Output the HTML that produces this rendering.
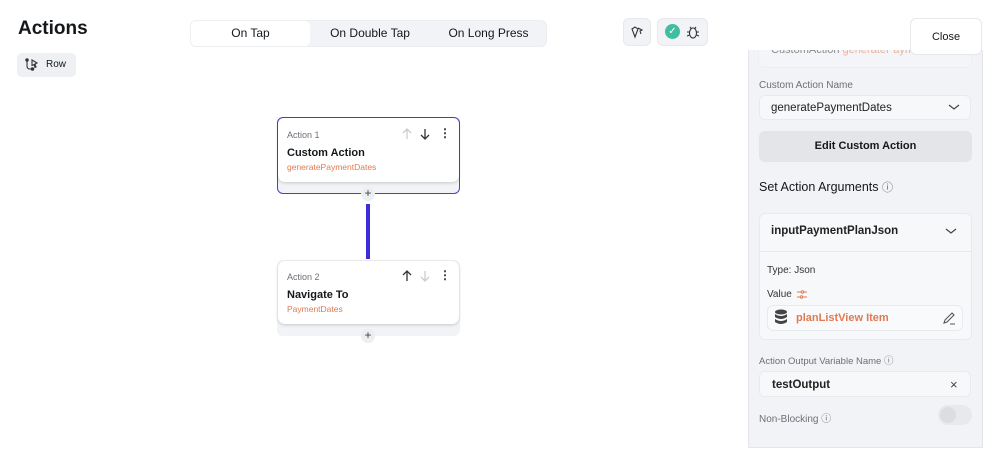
<!DOCTYPE html>
<html><head><style>
*{box-sizing:border-box;margin:0;padding:0}
body{width:1000px;height:467px;background:#fff;font-family:"Liberation Sans",sans-serif;position:relative;overflow:hidden;color:#14181b}
.abs{position:absolute}
.seg{left:190px;top:20px;width:357px;height:27px;background:#f1f3f6;border-radius:6px;border:1px solid #eceef2}
.seg div{position:absolute;top:0;height:25px;line-height:25px;font-size:12px;text-align:center}
.card{background:#fff;border-radius:7px;box-shadow:0 1px 3px rgba(0,0,0,.18);}
.lbl{font-size:10px;color:#6b7075}
.ttl{font-size:11px;font-weight:bold;color:#14181b}
.sub{font-size:8.5px;color:#e07a52}
.plus{width:14px;height:14px;border-radius:50%;background:#eceef1;font-size:12px;line-height:13px;text-align:center;color:#444}
.panel{left:748px;top:50px;width:235px;height:398px;background:#f2f3f6;border:1px solid #e4e6ea;border-top:none}
.fld{background:#f7f8fa;border:1px solid #e8eaee;border-radius:6px}
</style></head><body>
<div class="abs" style="left:18px;top:18px;font-size:19px;font-weight:bold">Actions</div>
<div class="abs" style="left:17px;top:53px;width:59px;height:24px;background:#eef0f3;border-radius:5px;font-size:10px;line-height:24px;padding-left:29px">Row</div>
<svg class="abs" style="left:25px;top:58px" width="14" height="14" viewBox="0 0 14 14" fill="none" stroke="#333" stroke-width="1.1"><circle cx="2" cy="2" r="1.2" fill="#333"/><path d="M2 3v5q0 3 3 3h1"/><circle cx="7.5" cy="11" r="1.2" fill="#333"/><path d="M7 2l5 3-2 1 1 3-1 .5-1-3-2 1z"/></svg>
<div class="abs seg"><div style="left:0;width:119px;background:#fff;border-radius:5px">On Tap</div><div style="left:119px;width:120px">On Double Tap</div><div style="left:239px;width:117px">On Long Press</div></div>
<div class="abs" style="left:623px;top:18px;width:28px;height:28px;background:#f1f3f6;border-radius:6px;border:1px solid #e6e8ec"></div>
<svg class="abs" style="left:629px;top:24px" width="16" height="16" viewBox="0 0 16 16" fill="none" stroke="#333" stroke-width="1.1"><path d="M3 5l3-2 3 2-3 8z"/><path d="M9 4l4 2-2 1 1 3"/></svg>
<div class="abs" style="left:657px;top:18px;width:51px;height:28px;background:#f1f3f6;border-radius:6px;border:1px solid #e6e8ec"></div>
<div class="abs" style="left:665px;top:24px;width:15px;height:15px;border-radius:50%;background:#3fbf9f;color:#fff;font-size:10px;line-height:15px;text-align:center">✓</div>
<svg class="abs" style="left:686px;top:24px" width="14" height="16" viewBox="0 0 14 16" fill="none" stroke="#333" stroke-width="1.1"><ellipse cx="7" cy="9" rx="3.5" ry="5"/><path d="M4 3l1.5 2M10 3L8.5 5M1 8h2.5M10.5 8H13M1 12l2.5-1M13 12l-2.5-1"/></svg>
<div class="abs panel"></div>
<div class="abs" style="left:748px;top:50px;width:235px;height:20px;overflow:hidden">
<div class="abs fld" style="left:10px;top:-20px;width:214px;height:38px;font-size:11px;color:#333;padding:13px 0 0 12px;opacity:.55">CustomAction <span style="color:#e07a52">generatePaymentDates</span></div></div>
<div class="abs" style="left:910px;top:18px;width:72px;height:37px;background:#fff;border:1px solid #e6e8ec;border-radius:6px;font-size:11px;line-height:36px;text-align:center">Close</div>
<div class="abs lbl" style="left:759px;top:80px">Custom Action Name</div>
<div class="abs fld" style="left:759px;top:95px;width:212px;height:25px;font-size:11.5px;line-height:24px;padding-left:11px;color:#222">generatePaymentDates</div>
<svg class="abs" style="left:948px;top:102px" width="12" height="10" viewBox="0 0 12 10" fill="none" stroke="#444" stroke-width="1.2"><path d="M1 3l5 4 5-4"/></svg>
<div class="abs" style="left:759px;top:131px;width:213px;height:31px;background:#e3e5e9;border-radius:6px;font-size:11px;font-weight:bold;line-height:31px;text-align:center">Edit Custom Action</div>
<div class="abs" style="left:759px;top:179px;font-size:12.5px">Set Action Arguments <span style="font-size:11px;color:#666">ⓘ</span></div>
<div class="abs fld" style="left:759px;top:213px;width:213px;height:127px"></div>
<div class="abs" style="left:759px;top:251px;width:213px;height:1px;background:#e6e8ec"></div>
<div class="abs" style="left:771px;top:225px;font-size:11.5px;font-weight:bold;color:#222">inputPaymentPlanJson</div>
<svg class="abs" style="left:945px;top:226px" width="12" height="10" viewBox="0 0 12 10" fill="none" stroke="#444" stroke-width="1.2"><path d="M1 3l5 4 5-4"/></svg>
<div class="abs lbl" style="left:767px;top:265px;color:#333">Type: Json</div>
<div class="abs lbl" style="left:767px;top:289px;color:#333">Value</div>
<svg class="abs" style="left:796px;top:289px" width="12" height="11" viewBox="0 0 12 11" fill="none" stroke="#e07a52" stroke-width="1"><path d="M1 3h4M8 3h3M1 8h3M7 8h4"/><circle cx="6.5" cy="3" r="1.2"/><circle cx="5.5" cy="8" r="1.2"/></svg>
<div class="abs fld" style="left:767px;top:305px;width:196px;height:26px;background:#f9fafb"></div>
<svg class="abs" style="left:774px;top:309px" width="14" height="16" viewBox="0 0 14 16" fill="#444"><ellipse cx="7" cy="3" rx="6" ry="2.5"/><path d="M1 5q6 4 12 0v3q-6 4-12 0zM1 10q6 4 12 0v3q-6 4-12 0z"/></svg>
<div class="abs" style="left:796px;top:312px;font-size:11px;color:#e07a52;font-weight:bold">planListView Item</div>
<svg class="abs" style="left:942px;top:311px" width="14" height="14" viewBox="0 0 14 14" fill="none" stroke="#555" stroke-width="1.1"><path d="M2 12l1-3 7-7 2 2-7 7zM8 13h5"/></svg>
<div class="abs lbl" style="left:759px;top:353px;font-size:9.5px">Action Output Variable Name ⓘ</div>
<div class="abs fld" style="left:759px;top:371px;width:212px;height:26px;font-size:11.5px;font-weight:bold;line-height:26px;padding-left:12px;color:#222">testOutput</div>
<div class="abs" style="left:950px;top:377px;font-size:13px;color:#444">×</div>
<div class="abs lbl" style="left:759px;top:410px;font-size:10px">Non-Blocking ⓘ</div>
<div class="abs" style="left:938px;top:405px;width:34px;height:20px;border-radius:10px;background:#e8e9ec"><div style="position:absolute;left:2px;top:2px;width:16px;height:16px;border-radius:50%;background:#dcdde0"></div></div>
<!-- flow -->
<div class="abs" style="left:277px;top:117px;width:183px;height:77px;border:1.5px solid #4b3fd0;border-radius:6px;background:#f2f3f6"></div>
<div class="abs card" style="left:278px;top:118px;width:181px;height:64px"></div>
<div class="abs lbl" style="left:287px;top:130px;font-size:9px">Action 1</div>
<div class="abs ttl" style="left:287px;top:147px">Custom Action</div>
<div class="abs sub" style="left:287px;top:162px">generatePaymentDates</div>
<svg class="abs" style="left:402px;top:128px" width="10" height="12" viewBox="0 0 10 12" fill="none" stroke="#ccc" stroke-width="1.3"><path d="M5 11V1M1 5l4-4 4 4"/></svg>
<svg class="abs" style="left:420px;top:128px" width="10" height="12" viewBox="0 0 10 12" fill="none" stroke="#333" stroke-width="1.3"><path d="M5 1v10M1 7l4 4 4-4"/></svg>
<div class="abs" style="left:439px;top:126px;font-size:12px;font-weight:bold;color:#333">⋮</div>
<div class="abs plus" style="left:361px;top:187px">+</div>
<div class="abs" style="left:366px;top:204px;width:4px;height:55px;background:#3b2fd6"></div>
<div class="abs" style="left:277px;top:260px;width:183px;height:76px;background:#f2f3f6;border-radius:6px"></div>
<div class="abs card" style="left:278px;top:261px;width:181px;height:63px"></div>
<div class="abs lbl" style="left:287px;top:272px;font-size:9px">Action 2</div>
<div class="abs ttl" style="left:287px;top:289px">Navigate To</div>
<div class="abs sub" style="left:287px;top:304px">PaymentDates</div>
<svg class="abs" style="left:402px;top:270px" width="10" height="12" viewBox="0 0 10 12" fill="none" stroke="#333" stroke-width="1.3"><path d="M5 11V1M1 5l4-4 4 4"/></svg>
<svg class="abs" style="left:420px;top:270px" width="10" height="12" viewBox="0 0 10 12" fill="none" stroke="#ccc" stroke-width="1.3"><path d="M5 1v10M1 7l4 4 4-4"/></svg>
<div class="abs" style="left:439px;top:268px;font-size:12px;font-weight:bold;color:#333">⋮</div>
<div class="abs plus" style="left:361px;top:329px">+</div>
</body></html>
